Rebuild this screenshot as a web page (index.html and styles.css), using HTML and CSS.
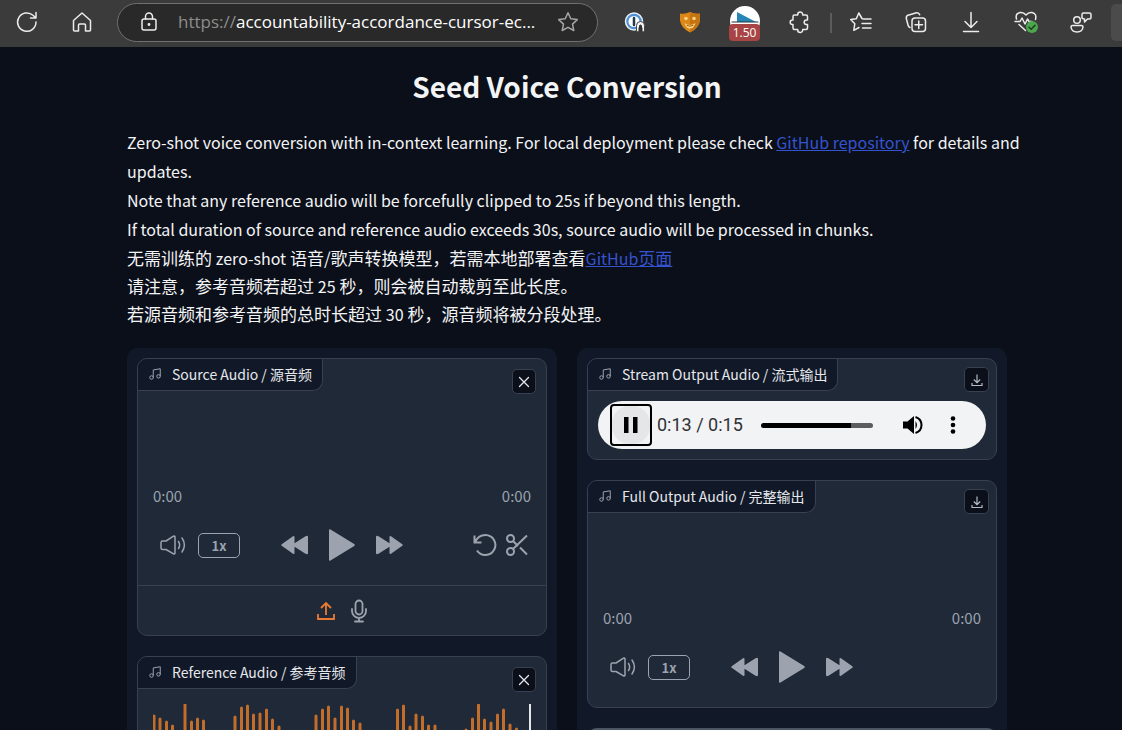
FILE: index.html
```html
<!DOCTYPE html>
<html lang="en">
<head>
<meta charset="utf-8">
<title>Seed Voice Conversion</title>
<link rel="stylesheet" href="styles.css">
</head>
<body>
<svg class="defs" aria-hidden="true">
  <symbol id="note" viewBox="0 0 24 24"><g fill="none" stroke="currentColor" stroke-width="1.7"><path d="M9 18V5l12-2v13"/><circle cx="6" cy="18" r="3"/><circle cx="18" cy="16" r="3"/></g></symbol>
  <symbol id="close" viewBox="0 0 14 14"><path d="M2.500 2.500l9 9M11.500 2.500l-9 9" fill="none" stroke="currentColor" stroke-width="1.300" stroke-linecap="round"/></symbol>
  <symbol id="save" viewBox="0 0 14 14"><path d="M7 1.500v8M3.800 6.500L7 9.700l3.200-3.200M2 10v2.500h10V10" fill="none" stroke="currentColor" stroke-width="1.200"/></symbol>
  <symbol id="volume" viewBox="0 0 26 22"><g fill="none" stroke="currentColor" stroke-width="1.500" stroke-linecap="round" stroke-linejoin="round"><path d="M1 8.500Q1 7 2.500 7H6l7.500-4.800Q15 1.500 15 3v16q0 1.500-1.500.8L6 15.500H2.500Q1 15.500 1 14z"/><path d="M18.500 7.500q2.300 3.500 0 7M22 4q4.800 7 0 14"/></g></symbol>
  <symbol id="back" viewBox="0 0 28 20"><path d="M.7 9.200L12 1.200q1.500-.9 1.500.8v6.200L24.500 1.200q2.500-1.200 2.500.8v16q0 2-2.500.8l-11-7V18q0 1.700-1.500.8L.7 10.800q-1-.8 0-1.600z" fill="currentColor"/></symbol>
  <symbol id="forward" viewBox="0 0 28 20"><path d="M27.300 9.200L16 1.200q-1.500-.9-1.500.8v6.200L3.500 1.200Q1 0 1 2v16q0 2 2.500.8l11-7V18q0 1.700 1.500.8l11.300-8q1-.8 0-1.600z" fill="currentColor"/></symbol>
  <symbol id="play" viewBox="0 0 26 32"><path d="M0 1.200Q0-.5 1.500.5L25.200 15q1.200 1 0 2L1.500 31.500Q0 32.500 0 30.800z" fill="currentColor"/></symbol>
</svg>

<header class="toolbar">
  <button class="tool" aria-label="Refresh"><svg width="24" height="24" viewBox="0 0 24 24"><path d="M21 12a9.200 9.200 0 1 1-3-6.700L21 8M21 2.500V8h-5.500"/></svg></button>
  <button class="tool" aria-label="Home"><svg width="24" height="24" viewBox="0 0 24 24"><path d="M3.500 10.500L12 3l8.500 7.500V20q0 1-1 1h-4v-6q0-1-1-1h-5q-1 0-1 1v6h-4q-1 0-1-1z"/></svg></button>
  <div class="address">
    <svg width="22" height="22" viewBox="0 0 22 22"><rect x="4" y="8" width="14" height="11" rx="2"/><path d="M7.500 8V5.500a3.500 3.500 0 0 1 7 0V8"/><circle cx="11" cy="13.500" r=".7"/></svg>
    <span class="url"><span class="scheme">https://</span>accountability-accordance-cursor-ec...</span>
    <button class="star" aria-label="Add to favorites"><svg width="22" height="22" viewBox="0 0 22 22"><path d="M11 1.800l2.800 6 6.500.8-4.800 4.500 1.300 6.400-5.800-3.200-5.800 3.200 1.300-6.400L1.700 8.600l6.500-.8z"/></svg></button>
  </div>
  <button class="tool" aria-label="Password manager"><svg width="22" height="22" viewBox="0 0 22 22"><circle cx="10" cy="10.500" r="8.500" fill="#4f91d0" stroke="#e8f1fa"/><circle cx="10" cy="10.500" r="5.500" fill="#fff" stroke="none"/><path d="M10 7v7" stroke="#26384b" stroke-width="2.500"/><path d="M12.500 20.500V14.500a4 4 0 0 1 8 0v6z" fill="#f5f5f5" stroke="#444" stroke-width="1"/><path d="M15 20v-3.500h3V20zM15.500 16v-1.500q1-1 2 0V16" fill="#333" stroke="#333" stroke-width="1"/></svg></button>
  <button class="tool" aria-label="Mask extension"><svg width="22" height="22" viewBox="0 0 22 22"><path d="M1 2.500Q6 3.500 11 1q5 2.500 10 1.500v7Q20 17 11 21.500 2 17 1 9.500z" fill="#dc8717" stroke="none"/><path d="M11 1q5 2.500 10 1.500v7Q20 17 11 21.500z" fill="#c47512" stroke="none"/><circle cx="7" cy="7.500" r="1.800" fill="#fbd27d" stroke="none"/><circle cx="15" cy="7.500" r="1.800" fill="#fbd27d" stroke="none"/><path d="M5.500 12q5.500 4 11 0-1.500 5.500-5.500 5.500T5.500 12z" fill="#fbd27d" stroke="none"/><path d="M8 14.500q3 1.500 6 0" stroke="#a35f10" stroke-width="1"/></svg></button>
  <button class="tool speed" aria-label="Video speed"><svg width="30" height="32" viewBox="0 0 30 32"><circle cx="15" cy="15" r="15" fill="#fff" stroke="none"/><path d="M7 6l19 10H7z" fill="#2687b7" stroke="none"/><path d="M2 16h26" stroke="#26343d" stroke-width="1"/></svg><span class="speed-badge">1.50</span></button>
  <button class="tool" aria-label="Extensions"><svg width="24" height="24" viewBox="0 0 24 24"><path d="M6.500 5h3.200V4.500a2.500 2.500 0 0 1 5 0V5H18q1.500 0 1.500 1.500V10h-1a2.300 2.300 0 0 0 0 4.600h1V18q0 1.500-1.500 1.500h-3.300v.5a2.500 2.500 0 0 1-5 0v-.5H6.500Q5 19.500 5 18v-3.400h-.5a2.300 2.300 0 0 1 0-4.600H5V6.500Q5 5 6.500 5z"/></svg></button>
  <span class="separator"></span>
  <button class="tool" aria-label="Favorites"><svg width="24" height="24" viewBox="0 0 24 24"><path d="M13 8.500L9.800 3 7.300 8.700l-5.600.8 4.100 4.200-1 6.600L10 17.500M14 9h8M13 13.500h9M13.500 18H22"/></svg></button>
  <button class="tool" aria-label="Collections"><svg width="24" height="24" viewBox="0 0 24 24"><rect x="8" y="8" width="13.500" height="13.500" rx="3"/><path d="M14.750 11v7.500M11 14.750h7.500M6 17.500q-1.500-.5-2-2.500L2.300 8.500Q2 6 4 5.300l8.500-2.500q2.300-.5 3.200 2"/></svg></button>
  <button class="tool" aria-label="Downloads"><svg width="24" height="24" viewBox="0 0 24 24"><path d="M12 2.500v15M6 11.500l6 6 6-6M4.500 21.500h15"/></svg></button>
  <button class="tool" aria-label="Browser essentials"><svg width="26" height="26" viewBox="0 0 26 26"><path d="M3.500 10Q2 4.500 7 3.500q3.500-.5 6 2.500 2.500-3 6-2.500 5 1 3.500 7M2 12.500h5L9 9l3 6 2.500-5 1.500 2.500h3M6 15.500l6.500 6"/><circle cx="19" cy="18" r="6" fill="#4ca64d" stroke="none"/><path d="M16 18.200l2.200 2 3.800-4" stroke="#1d3b1e"/></svg></button>
  <button class="tool" aria-label="Profiles"><svg width="24" height="24" viewBox="0 0 24 24"><circle cx="8" cy="10" r="3.300"/><path d="M3.500 15.500h9q1.500 0 1.500 1.500-.5 5-6 5t-6-5q0-1.500 1.500-1.500zM14.500 3h6q1.500 0 1.500 1.500v3Q22 9 20.500 9h-2l-3 3V9Q13 9 13 7.500v-3Q13 3 14.500 3z"/></svg></button>
  <span class="edge"></span>
</header>

<main class="page">
  <div class="content">
    <h1>Seed Voice Conversion</h1>
    <p class="intro">Zero-shot voice conversion with in-context learning. For local deployment please check <a href="#repo">GitHub repository</a> for details and updates.<br>Note that any reference audio will be forcefully clipped to 25s if beyond this length.<br>If total duration of source and reference audio exceeds 30s, source audio will be processed in chunks.</p>
    <p class="intro-zh" lang="zh-CN">无需训练的 <span class="latin">zero-shot</span> 语音/歌声转换模型，若需本地部署查看<a href="#repo-zh"><span class="latin">GitHub</span>页面</a><br>请注意，参考音频若超过 <span class="latin">25</span> 秒，则会被自动裁剪至此长度。<br>若源音频和参考音频的总时长超过 <span class="latin">30</span> 秒，源音频将被分段处理。</p>

    <div class="columns">
      <div class="column">
        <section class="card">
          <h2 class="label"><svg width="14" height="14"><use href="#note"/></svg>Source Audio / 源音频</h2>
          <button class="corner" aria-label="Clear"><svg width="14" height="14"><use href="#close"/></svg></button>
          <div class="player">
            <div class="times"><span>0:00</span><span>0:00</span></div>
            <div class="controls">
              <div class="group"><button aria-label="Volume"><svg width="26" height="22"><use href="#volume"/></svg></button><button class="rate">1x</button></div>
              <div class="group transport"><button aria-label="Skip back"><svg width="28" height="20"><use href="#back"/></svg></button><button aria-label="Play"><svg width="26" height="32"><use href="#play"/></svg></button><button aria-label="Skip forward"><svg width="28" height="20"><use href="#forward"/></svg></button></div>
              <div class="group edit">
                <button aria-label="Undo"><svg width="24" height="24" viewBox="0 0 24 24"><path d="M1.500 2.500v7h7M2 9.500C4 4.500 8 2 12.500 2a10 10 0 1 1-8.500 15.500" fill="none" stroke="currentColor" stroke-width="2"/></svg></button>
                <button aria-label="Trim"><svg width="24" height="24" viewBox="0 0 24 24"><g fill="none" stroke="currentColor" stroke-width="2"><circle cx="5.500" cy="5.500" r="3.500"/><circle cx="5.500" cy="18.500" r="3.500"/><path d="M8 8l5 5M8 16L22 2.500M15 14.500l7 7"/></g></svg></button>
              </div>
            </div>
          </div>
          <div class="sources">
            <button class="active" aria-label="Upload"><svg width="20" height="20" viewBox="0 0 20 20"><path d="M10 14V2M5 7l5-5 5 5M2 13v5h16v-5" fill="none" stroke="currentColor" stroke-width="1.800"/></svg></button>
            <button aria-label="Record"><svg width="18" height="24" viewBox="0 0 18 24"><g fill="none" stroke="currentColor" stroke-width="1.800" stroke-linecap="round"><rect x="5.500" y="1.500" width="7" height="14" rx="3.500"/><path d="M2 10v2a7 7 0 0 0 14 0v-2M9 19v3.500M5 22.500h8"/></g></svg></button>
          </div>
        </section>

        <section class="card">
          <h2 class="label"><svg width="14" height="14"><use href="#note"/></svg>Reference Audio / 参考音频</h2>
          <button class="corner" aria-label="Clear"><svg width="14" height="14"><use href="#close"/></svg></button>
          <svg class="wave" width="380" height="60" viewBox="0 0 380 60" aria-label="Waveform">
            <path d="M1 60V12M7 60V15M13.500 60V18M19.500 60V22M32 60V1M38.500 60V18M44.500 60V15M50.500 60V17M82 60V13M88.500 60V4M94.500 60V2M100.500 60V11M107 60V10M113.500 60V6M119.500 60V16M126 60V23M163 60V12M169.500 60V6M175.500 60V3M182 60V15M188.500 60V3M194.500 60V5M200.500 60V17M207 60V20M244.500 60V6M250.500 60V2M257 60V23M263 60V11M269.500 60V13M275.500 60V22M282 60V22M313 60V26M319.500 60V15M325.500 60V1M331.500 60V16M338 60V19M344.500 60V11M350.500 60V6M357 60V21M363.500 60V25" stroke="#c36d2b" stroke-width="3" stroke-linecap="round"/>
            <path d="M377 0v60" stroke="#e5e7eb" stroke-width="2"/>
          </svg>
        </section>
      </div>

      <div class="column">
        <section class="card">
          <h2 class="label"><svg width="14" height="14"><use href="#note"/></svg>Stream Output Audio / 流式输出</h2>
          <button class="corner save" aria-label="Download"><svg width="14" height="14"><use href="#save"/></svg></button>
          <div class="native">
            <button class="pause" aria-label="Pause"><svg width="14" height="16" viewBox="0 0 14 16"><path d="M0 0h4.500v16H0zM9 0h4.500v16H9z"/></svg></button>
            <span class="clock">0:13 / 0:15</span>
            <input class="seek" type="range" min="0" max="100" value="80" aria-label="Seek">
            <button aria-label="Mute"><svg width="20" height="20" viewBox="0 0 20 20"><path d="M0 6.500h4.500L11 1v18l-6.500-5.500H0z"/><path d="M12.500 6q3 4 0 8z"/><path d="M12.500 2q6 2 6 8t-6 8" fill="none" stroke="#000" stroke-width="2"/></svg></button>
            <button aria-label="More options"><svg width="6" height="18" viewBox="0 0 6 18"><circle cx="3" cy="2.500" r="2.300"/><circle cx="3" cy="9" r="2.300"/><circle cx="3" cy="15.500" r="2.300"/></svg></button>
          </div>
        </section>

        <section class="card">
          <h2 class="label"><svg width="14" height="14"><use href="#note"/></svg>Full Output Audio / 完整输出</h2>
          <button class="corner save" aria-label="Download"><svg width="14" height="14"><use href="#save"/></svg></button>
          <div class="player">
            <div class="times"><span>0:00</span><span>0:00</span></div>
            <div class="controls">
              <div class="group"><button aria-label="Volume"><svg width="26" height="22"><use href="#volume"/></svg></button><button class="rate">1x</button></div>
              <div class="group transport"><button aria-label="Skip back"><svg width="28" height="20"><use href="#back"/></svg></button><button aria-label="Play"><svg width="26" height="32"><use href="#play"/></svg></button><button aria-label="Skip forward"><svg width="28" height="20"><use href="#forward"/></svg></button></div>
            </div>
          </div>
        </section>
        <button class="wide" aria-label="Action"></button>
      </div>
    </div>
  </div>
</main>
</body>
</html>
```

FILE: styles.css
```css
* { box-sizing: border-box; }

body {
  margin: 0;
  height: 100vh;
  display: flex;
  flex-direction: column;
  overflow: hidden;
  background: #0b0f19;
  color: #f3f4f6;
  font-family: "Noto Sans CJK SC", sans-serif;
}

button {
  display: flex;
  align-items: center;
  justify-content: center;
  padding: 0;
  border: 0;
  background: none;
  color: inherit;
  font: inherit;
}

svg { display: block; flex: none; }
.defs { position: absolute; width: 0; height: 0; }

/* Browser toolbar */
.toolbar {
  flex: none;
  display: flex;
  align-items: center;
  height: 47px;
  padding-bottom: 2px;
  background: #3b3b3b;
  color: #ececec;
}
.toolbar svg {
  fill: none;
  stroke: currentColor;
  stroke-width: 1.5;
  stroke-linejoin: round;
  stroke-linecap: round;
}
.tool { flex: none; width: 55px; height: 40px; padding: 0 2px 2px 0; }
.address {
  flex: 1;
  min-width: 0;
  display: flex;
  align-items: center;
  height: 39px;
  margin: 0 10px 0 7px;
  padding: 0 18px 2px 20px;
  border: 1px solid #707070;
  border-radius: 20px;
  background: #292929;
}
.url {
  flex: 1;
  min-width: 0;
  margin-left: 18px;
  overflow: hidden;
  white-space: nowrap;
  color: #fff;
  font: 17px/24px "Open Sans", sans-serif;
}
.scheme { color: #8d8d8d; }
.star { color: #a5a5a5; }
.speed { position: relative; }
.speed-badge {
  position: absolute;
  left: 11px;
  top: 21px;
  width: 31px;
  border-radius: 4px;
  background: #a84444;
  color: #fff;
  font: 12px/17px "Open Sans", sans-serif;
}
.separator { width: 2px; height: 20px; margin: 0 2px; background: #5c5c5c; }
.edge {
  width: 11px;
  height: 37px;
  margin-left: 2px;
  border-radius: 5px 0 0 5px;
  background: #4b4b4b;
}

/* Page */
.page {
  flex: 1;
  min-height: 0;
  overflow: auto;
  scrollbar-width: none;
  padding: 19px 0 0 12px;
}
.content { max-width: 880px; margin: 0 auto; }
h1 {
  margin: 0 0 22px;
  text-align: center;
  font-size: 28px;
  font-weight: 700;
  line-height: 40px;
}
.intro { margin: 0 -20px 0 0; font-size: 16px; line-height: 29px; }
.intro-zh { margin: 0; font-size: 17px; line-height: 28px; }
.latin { font-size: 16px; }
a { color: #3553cf; text-decoration: underline; }

.columns {
  display: grid;
  grid-template-columns: repeat(2, minmax(0, 1fr));
  gap: 20px;
  margin-top: 20px;
}
.column {
  display: flex;
  flex-direction: column;
  gap: 20px;
  padding: 10px;
  border-radius: 10px;
  background: #111827;
}
.card {
  position: relative;
  overflow: hidden;
  border: 1px solid #374151;
  border-radius: 10px;
  background: #1f2937;
}
.label {
  display: flex;
  align-items: center;
  gap: 10px;
  width: fit-content;
  height: 32px;
  margin: 0;
  padding: 0 10px 1px;
  border: solid #374151;
  border-width: 0 1px 1px 0;
  border-radius: 0 0 10px 0;
  background: #111827;
  color: #e5e7eb;
  font-size: 14px;
  font-weight: 400;
}
.label svg { color: #9ca3af; }
.corner {
  position: absolute;
  top: 10px;
  right: 10px;
  width: 24px;
  height: 25px;
  border: 1px solid #374151;
  border-radius: 5px;
  background: #0b0f19;
  color: #e5e7eb;
}
.corner.save { top: 8px; right: 7px; width: 25px; color: #b4b9c2; }

/* Audio player */
.player { padding: 93px 15px 20px; color: #9ca3af; }
.times {
  display: flex;
  justify-content: space-between;
  font-size: 15px;
  line-height: 24px;
}
.controls {
  display: grid;
  grid-template-columns: 1fr auto 1fr;
  align-items: center;
  height: 40px;
  margin-top: 17px;
}
.group { display: flex; align-items: center; gap: 12px; padding-left: 7px; }
.transport { gap: 20px; padding: 0; }
.edit { justify-content: flex-end; gap: 8px; padding-right: 2px; }
.rate {
  width: 42px;
  height: 25px;
  border: 1px solid #9ca3af;
  border-radius: 5px;
  font-size: 13px;
  font-weight: 700;
}
.sources {
  display: flex;
  align-items: center;
  justify-content: center;
  gap: 14px;
  height: 50px;
  border-top: 1px solid #374151;
  color: #9ca3af;
}
.active { color: #ea7a32; }
.wave { margin: 15px 0 60px 15px; }

.native {
  display: flex;
  align-items: center;
  height: 48px;
  margin: 10px;
  padding: 0 30px 0 12px;
  border-radius: 24px;
  background: #f1f3f4;
  color: #303134;
}
.pause {
  width: 42px;
  height: 42px;
  border: 2px solid #000;
  border-radius: 4px;
  background: radial-gradient(circle, #e4e6e7 19px, #f1f3f4 20px);
}
.clock { margin-left: 5px; font: 18px/24px Roboto, sans-serif; }
.seek {
  flex: 1;
  min-width: 0;
  height: 5px;
  margin: 0 30px 0 18px;
  appearance: none;
  border-radius: 3px;
  background: linear-gradient(to right, #000 80%, #5c5d5e 80%);
}
.seek::-webkit-slider-thumb { appearance: none; width: 1px; height: 1px; }
.native button:last-child { margin-left: 27px; }
.wide { height: 44px; border-radius: 10px; background: #4b5563; }
```
